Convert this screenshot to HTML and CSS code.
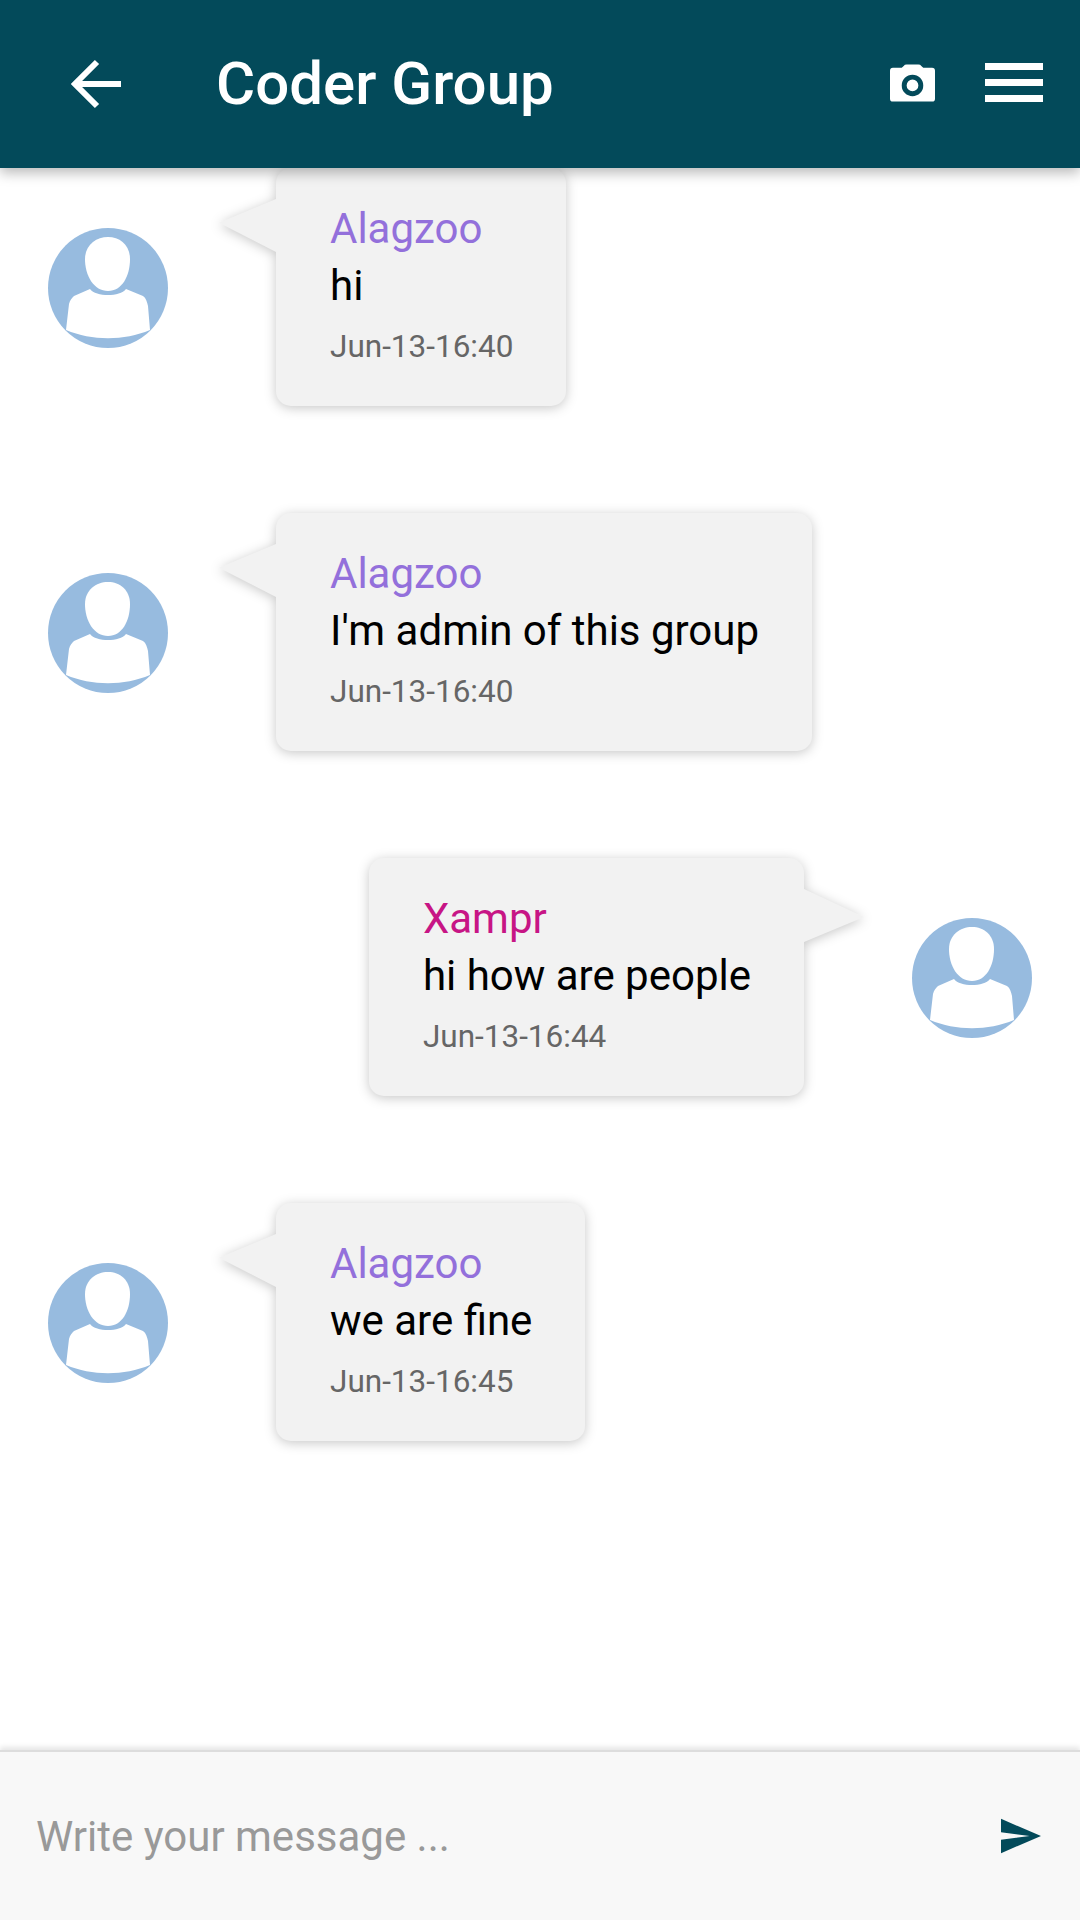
FILE: index.html
```html
<!DOCTYPE html>
<html>
<head>
<title>Coder Group</title>
<meta charset="utf-8" />
<link rel="stylesheet" href="styles.css">
</head>
<body>
	<div id="header">
		<svg class="ic_back" width="50" height="50" viewBox="0 0 50 50">
			<path d="M50 25H5M26 3L4 25l22 22" fill="none" stroke="#fff" stroke-width="6" />
		</svg>
		<h1 id="title">Coder Group</h1>
		<svg class="ic_camera" width="45" height="38" viewBox="0 0 46 38">
			<path d="M3 3.500H12L14 1.500Q15 0 17 0H29Q31 0 32 1.500L34 3.500H43Q46 3.500 46 6.500V35Q46 38 43 38H3Q0 38 0 35V6.500Q0 3.500 3 3.500Z" fill="#fff" />
			<circle cx="23" cy="21.500" r="8.500" fill="#fff" stroke="#034a5a" stroke-width="5" />
		</svg>
		<div class="ic_menu"><span></span><span></span><span></span></div>
	</div>

	<div id="chat">
		<div class="row">
			<svg class="avatar" width="120" height="120" viewBox="0 0 120 120"><use href="#person" /></svg>
			<div class="bubble left">
				<div class="name admin">Alagzoo</div>
				<div class="msg">hi</div>
				<div class="time">Jun-13-16:40</div>
			</div>
		</div>
		<div class="row">
			<svg class="avatar" width="120" height="120" viewBox="0 0 120 120"><use href="#person" /></svg>
			<div class="bubble left">
				<div class="name admin">Alagzoo</div>
				<div class="msg">I'm admin of this group</div>
				<div class="time">Jun-13-16:40</div>
			</div>
		</div>
		<div class="row mine">
			<div class="bubble right">
				<div class="name">Xampr</div>
				<div class="msg">hi how are people</div>
				<div class="time">Jun-13-16:44</div>
			</div>
			<svg class="avatar" width="120" height="120" viewBox="0 0 120 120"><use href="#person" /></svg>
		</div>
		<div class="row">
			<svg class="avatar" width="120" height="120" viewBox="0 0 120 120"><use href="#person" /></svg>
			<div class="bubble left">
				<div class="name admin">Alagzoo</div>
				<div class="msg">we are fine</div>
				<div class="time">Jun-13-16:45</div>
			</div>
		</div>
	</div>

	<div id="footer">
		<div id="placeholder">Write your message ...</div>
		<svg class="ic_send" width="40" height="36" viewBox="2 3 21 18">
			<path d="M2.010 21L23 12 2.010 3 2 10l15 2-15 2z" fill="#034a5a" />
		</svg>
	</div>

	<svg width="0" height="0" class="defs">
		<defs>
			<g id="person">
				<circle cx="60" cy="60" r="60" fill="#97bbdf" />
				<path d="M60 9C72 9 82 17 82 31C82 48 74 63 60 63C46 63 37 48 37 31C37 17 48 9 60 9Z" fill="#fff" />
				<path d="M42 61C48 69 72 69 78 61L95 68C98 70 99 74 100 78L102 102C76 113 44 113 18 102L21 76C22 72 24 70 26 68Z" fill="#fff" />
			</g>
		</defs>
	</svg>
</body>
</html>
```

FILE: styles.css
```css
html, body {
	margin: 0;
	height: 1920px;
}
body {
	display: flex;
	flex-direction: column;
	background: #fff;
	font-family: Roboto, "Liberation Sans", sans-serif;
	overflow: hidden;
}
#header {
	position: relative;
	z-index: 2;
	flex: none;
	display: flex;
	align-items: center;
	height: 168px;
	padding: 0 37px 0 71px;
	background: #034a5a;
	box-shadow: 0 5px 12px rgba(0, 0, 0, 0.27);
}
#title {
	flex: 1;
	margin: 0 0 0 95px;
	color: #fff;
	font-size: 60px;
	font-weight: 500;
	line-height: 168px;
}
.ic_back { flex: none; }
.ic_camera { flex: none; margin: 0 50px 2px 0; }
.ic_menu {
	flex: none;
	display: flex;
	flex-direction: column;
	gap: 9px;
	width: 58px;
	margin-bottom: 3px;
}
.ic_menu span {
	display: block;
	height: 7px;
	background: #fff;
}
#chat {
	flex: 1;
	display: flex;
	flex-direction: column;
	gap: 107px;
	padding: 0 48px;
}
.row {
	display: flex;
	align-items: center;
	gap: 108px;
}
.row.mine { justify-content: flex-end; }
.avatar { flex: none; margin-top: 2px; }
.bubble {
	position: relative;
	box-sizing: border-box;
	height: 238px;
	padding: 32px 53px 0 54px;
	background: #f2f2f2;
	border-radius: 15px;
	filter: drop-shadow(0 2px 6px rgba(0, 0, 0, 0.22));
}
.bubble::before {
	content: "";
	position: absolute;
	top: 31px;
	height: 53px;
	background: #f2f2f2;
}
.bubble.left::before {
	left: -57px;
	width: 57px;
	clip-path: polygon(100% 0, 0 45%, 100% 100%);
}
.bubble.right::before {
	right: -60px;
	width: 60px;
	clip-path: polygon(0 0, 100% 53%, 0 100%);
}
.name {
	color: #c71585;
	font-size: 42px;
	line-height: 58px;
}
.name.admin { color: #9370db; }
.msg {
	color: #000;
	font-size: 42px;
	line-height: 56px;
}
.time {
	margin-top: 5px;
	color: #666;
	font-size: 31.500px;
	line-height: 56px;
}
#footer {
	flex: none;
	display: flex;
	align-items: center;
	justify-content: space-between;
	box-sizing: border-box;
	height: 170px;
	padding: 0 39px 0 36px;
	background: #f8f8f8;
	border-top: 2px solid #ddd;
	box-shadow: 0 -3px 5px rgba(0, 0, 0, 0.1);
}
#placeholder {
	color: #999;
	font-size: 42px;
}
.defs { position: absolute; }
```
